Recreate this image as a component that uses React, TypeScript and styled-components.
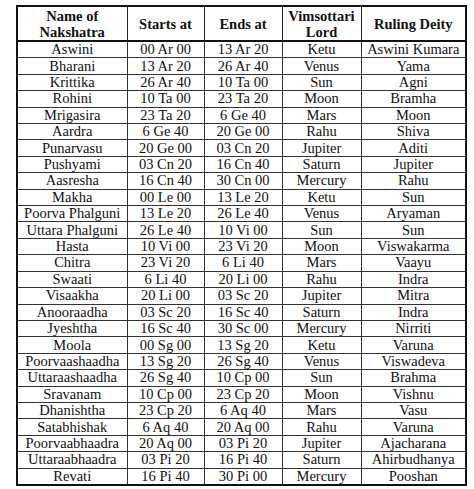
import React from 'react'
import styled, { createGlobalStyle } from 'styled-components'

const GlobalStyle = createGlobalStyle`
  html, body {
    margin: 0;
    padding: 0;
    background: #ffffff;
  }
`

const Page = styled.div`
  padding: 5px 0 0 16px;
  width: 474px;
  height: 489px;
  box-sizing: border-box;
  background: #ffffff;
`

const Table = styled.table`
  width: 449px;
  height: 481px;
  table-layout: fixed;
  border-collapse: collapse;
  border: 2px solid #111;
  font-family: 'Liberation Serif', 'Times New Roman', serif;
  color: #111;
`

const HeadCell = styled.th`
  height: 33px;
  padding: 0;
  font-size: 14.5px;
  font-weight: bold;
  line-height: 16px;
  text-align: center;
  vertical-align: middle;
  border: 1px solid #222;
  border-bottom: 2px solid #111;
`

const Cell = styled.td`
  padding: 0;
  font-size: 14.5px;
  line-height: 15px;
  text-align: center;
  vertical-align: middle;
  white-space: nowrap;
  border: 1px solid #333;
`

type Row = [string, string, string, string, string]

const rows: Row[] = [
  ['Aswini', '00 Ar 00', '13 Ar 20', 'Ketu', 'Aswini Kumara'],
  ['Bharani', '13 Ar 20', '26 Ar 40', 'Venus', 'Yama'],
  ['Krittika', '26 Ar 40', '10 Ta 00', 'Sun', 'Agni'],
  ['Rohini', '10 Ta 00', '23 Ta 20', 'Moon', 'Bramha'],
  ['Mrigasira', '23 Ta 20', '6 Ge 40', 'Mars', 'Moon'],
  ['Aardra', '6 Ge 40', '20 Ge 00', 'Rahu', 'Shiva'],
  ['Punarvasu', '20 Ge 00', '03 Cn 20', 'Jupiter', 'Aditi'],
  ['Pushyami', '03 Cn 20', '16 Cn 40', 'Saturn', 'Jupiter'],
  ['Aasresha', '16 Cn 40', '30 Cn 00', 'Mercury', 'Rahu'],
  ['Makha', '00 Le 00', '13 Le 20', 'Ketu', 'Sun'],
  ['Poorva Phalguni', '13 Le 20', '26 Le 40', 'Venus', 'Aryaman'],
  ['Uttara Phalguni', '26 Le 40', '10 Vi 00', 'Sun', 'Sun'],
  ['Hasta', '10 Vi 00', '23 Vi 20', 'Moon', 'Viswakarma'],
  ['Chitra', '23 Vi 20', '6 Li 40', 'Mars', 'Vaayu'],
  ['Swaati', '6 Li 40', '20 Li 00', 'Rahu', 'Indra'],
  ['Visaakha', '20 Li 00', '03 Sc 20', 'Jupiter', 'Mitra'],
  ['Anooraadha', '03 Sc 20', '16 Sc 40', 'Saturn', 'Indra'],
  ['Jyeshtha', '16 Sc 40', '30 Sc 00', 'Mercury', 'Nirriti'],
  ['Moola', '00 Sg 00', '13 Sg 20', 'Ketu', 'Varuna'],
  ['Poorvaashaadha', '13 Sg 20', '26 Sg 40', 'Venus', 'Viswadeva'],
  ['Uttaraashaadha', '26 Sg 40', '10 Cp 00', 'Sun', 'Brahma'],
  ['Sravanam', '10 Cp 00', '23 Cp 20', 'Moon', 'Vishnu'],
  ['Dhanishtha', '23 Cp 20', '6 Aq 40', 'Mars', 'Vasu'],
  ['Satabhishak', '6 Aq 40', '20 Aq 00', 'Rahu', 'Varuna'],
  ['Poorvaabhaadra', '20 Aq 00', '03 Pi 20', 'Jupiter', 'Ajacharana'],
  ['Uttaraabhaadra', '03 Pi 20', '16 Pi 40', 'Saturn', 'Ahirbudhanya'],
  ['Revati', '16 Pi 40', '30 Pi 00', 'Mercury', 'Pooshan'],
]

const widths = [110, 77, 78, 79, 105]

const App: React.FC = () => (
  <Page>
    <GlobalStyle />
    <Table>
      <colgroup>
        {widths.map((w, i) => (
          <col key={i} style={{ width: w }} />
        ))}
      </colgroup>
      <thead>
        <tr>
          <HeadCell>
            Name of
            <br />
            Nakshatra
          </HeadCell>
          <HeadCell>Starts at</HeadCell>
          <HeadCell>Ends at</HeadCell>
          <HeadCell>
            Vimsottari
            <br />
            Lord
          </HeadCell>
          <HeadCell>Ruling Deity</HeadCell>
        </tr>
      </thead>
      <tbody>
        {rows.map(r => (
          <tr key={r[0]}>
            {r.map((c, i) => (
              <Cell key={i}>{c}</Cell>
            ))}
          </tr>
        ))}
      </tbody>
    </Table>
  </Page>
)

export default App
